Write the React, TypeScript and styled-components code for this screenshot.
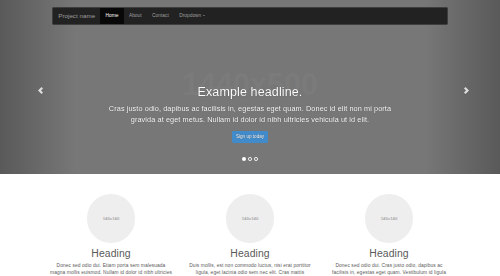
import React from "react";
import styled, { createGlobalStyle } from "styled-components";

const K = 500 / 1440;
const u = (n: number) => `${+(n * K).toFixed(3)}px`;

const Global = createGlobalStyle`
  html, body { margin: 0; padding: 0; overflow: hidden; background: #fff; }
  body {
    font-family: "Liberation Sans", Arial, Helvetica, sans-serif;
    color: #5a5a5a;
  }
  * { box-sizing: border-box; }
`;

const Carousel = styled.section`
  position: relative;
  height: ${u(500)};
  background: #777;
  overflow: hidden;
  display: flex;
  flex-direction: column;
  justify-content: flex-end;
  align-items: center;
`;

const PlaceholderArt = styled.div`
  position: absolute;
  inset: 0;
  display: flex;
  align-items: center;
  justify-content: center;
  padding-bottom: 4px;
  font: bold 30.5px Arial, "Liberation Sans", sans-serif;
  color: #7b7b7b;
`;

const Control = styled.div<{ $side: "left" | "right" }>`
  position: absolute;
  top: 0;
  bottom: 0;
  ${(p) => p.$side}: 0;
  width: 15%;
  background-image: linear-gradient(
    to ${(p) => (p.$side === "left" ? "right" : "left")},
    rgba(0, 0, 0, 0.25) 0,
    rgba(0, 0, 0, 0) 100%
  );
`;

const Chevron = styled.svg<{ $side: "left" | "right" }>`
  position: absolute;
  top: 86.8px;
  ${(p) => (p.$side === "left" ? "left: 38.3px;" : "right: 31.5px;")}
  width: 5px;
  height: 7px;
  fill: rgba(255, 255, 255, 0.78);
`;

const NavbarWrap = styled.header`
  position: absolute;
  top: ${u(20)};
  left: 0;
  right: 0;
  z-index: 20;
  display: flex;
  justify-content: center;
`;

const Navbar = styled.nav`
  width: ${u(1140)};
  height: 18px;
  background: #222;
  border: 1px solid #3e3e3e;
  border-radius: ${u(4)};
  display: flex;
  align-items: stretch;
`;

const Brand = styled.a`
  display: flex;
  align-items: center;
  padding: 0 ${u(15)};
  font-size: ${u(18)};
  color: #9d9d9d;
  text-decoration: none;
`;

const NavList = styled.ul`
  display: flex;
  margin: 0;
  padding: 0;
  list-style: none;
`;

const NavLink = styled.li<{ $active?: boolean }>`
  display: flex;
  align-items: center;
  padding: 0 ${u(15)};
  font-size: ${u(14)};
  color: ${(p) => (p.$active ? "#fff" : "#9d9d9d")};
  background: ${(p) => (p.$active ? "#080808" : "transparent")};
`;

const Caret = styled.span`
  display: inline-block;
  margin-left: 1.2px;
  border-top: 1.5px solid #9d9d9d;
  border-left: 1.5px solid transparent;
  border-right: 1.5px solid transparent;
`;

const Caption = styled.div`
  position: relative;
  z-index: 10;
  width: 60%;
  text-align: center;
  color: #fff;
  text-shadow: 0 ${u(1)} ${u(2)} rgba(0, 0, 0, 0.6);
  margin-bottom: 8px;
  will-change: transform;
`;

const Headline = styled.h1`
  margin: 0 0 4.7px;
  font-size: ${u(36)};
  line-height: 1.1;
  font-weight: 400;
  letter-spacing: 0.12px;
`;

const Lead = styled.p`
  margin: 0 0 5.7px;
  font-size: ${u(21)};
  line-height: 1.4;
  letter-spacing: 0.1px;
`;

const PrimaryButton = styled.a`
  display: inline-block;
  height: 12.3px;
  padding: 0 ${u(12)};
  font-size: 4.6px;
  line-height: 12.3px;
  color: #fff;
  background: #428bca;
  border-radius: ${u(4)};
  text-decoration: none;
  vertical-align: top;
`;

const Indicators = styled.ol`
  position: relative;
  z-index: 10;
  display: flex;
  align-items: center;
  margin: 0 0 12.6px;
  padding: 0;
  list-style: none;
`;

const Dot = styled.li<{ $active?: boolean }>`
  width: ${(p) => (p.$active ? "4.2px" : "3.6px")};
  height: ${(p) => (p.$active ? "4.2px" : "3.6px")};
  margin: ${(p) => (p.$active ? "0 0.9px" : "0 1.2px")};
  border-radius: 50%;
  border: ${(p) => (p.$active ? "none" : "0.8px solid #fff")};
  background: ${(p) => (p.$active ? "#fff" : "transparent")};
`;

const Marketing = styled.main`
  display: grid;
  grid-template-columns: repeat(3, 139px);
  justify-content: center;
  padding-top: 20.4px;
`;

const Column = styled.div`
  display: flex;
  flex-direction: column;
  align-items: center;
  text-align: center;
  padding: 0 ${u(15)};
`;

const Thumb = styled.div`
  width: ${u(140)};
  height: ${u(140)};
  border-radius: 50%;
  background: #eee;
  display: flex;
  align-items: center;
  justify-content: center;
  font: bold 4.3px Arial, "Liberation Sans", sans-serif;
  color: #aaa;
`;

const Heading = styled.h2`
  margin: 5.5px 0 3.5px;
  font-size: ${u(30)};
  line-height: 1.1;
  font-weight: 400;
  letter-spacing: 0.1px;
  color: #5a5a5a;
`;

const Blurb = styled.p`
  margin: 0 3px;
  font-size: ${u(14)};
  line-height: ${u(20)};
  letter-spacing: 0.09px;
  color: #5a5a5a;
`;

const chevronLeft = "M7 0 L10 3 L6 7 L10 11 L7 14 L0 7 Z";
const chevronRight = "M3 0 L0 3 L4 7 L0 11 L3 14 L10 7 Z";

const columns = [
  "Donec sed odio dui. Etiam porta sem malesuada magna mollis euismod. Nullam id dolor id nibh ultricies vehicula ut id elit. Morbi leo risus, porta ac consectetur ac, vestibulum at eros. Praesent commodo cursus magna.",
  "Duis mollis, est non commodo luctus, nisi erat porttitor ligula, eget lacinia odio sem nec elit. Cras mattis consectetur purus sit amet fermentum. Fusce dapibus, tellus ac cursus commodo, tortor mauris condimentum nibh, ut fermentum massa justo sit amet risus.",
  "Donec sed odio dui. Cras justo odio, dapibus ac facilisis in, egestas eget quam. Vestibulum id ligula porta felis euismod semper. Fusce dapibus, tellus ac cursus commodo, tortor mauris condimentum nibh, ut fermentum massa justo sit amet risus.",
];

export default function App() {
  return (
    <>
      <Global />
      <Carousel>
        <PlaceholderArt>1440x500</PlaceholderArt>
        <Control $side="left">
          <Chevron $side="left" viewBox="0 0 10 14">
            <path d={chevronLeft} />
          </Chevron>
        </Control>
        <Control $side="right">
          <Chevron $side="right" viewBox="0 0 10 14">
            <path d={chevronRight} />
          </Chevron>
        </Control>
        <NavbarWrap>
          <Navbar>
            <Brand>Project name</Brand>
            <NavList>
              <NavLink $active>Home</NavLink>
              <NavLink>About</NavLink>
              <NavLink>Contact</NavLink>
              <NavLink>
                Dropdown <Caret />
              </NavLink>
            </NavList>
          </Navbar>
        </NavbarWrap>
        <Caption>
          <Headline>Example headline.</Headline>
          <Lead>
            Cras justo odio, dapibus ac facilisis in, egestas eget quam. Donec id elit non mi porta
            gravida at eget metus. Nullam id dolor id nibh ultricies vehicula ut id elit.
          </Lead>
          <PrimaryButton>Sign up today</PrimaryButton>
        </Caption>
        <Indicators>
          <Dot $active />
          <Dot />
          <Dot />
        </Indicators>
      </Carousel>
      <Marketing>
        {columns.map((text, i) => (
          <Column key={i}>
            <Thumb>140x140</Thumb>
            <Heading>Heading</Heading>
            <Blurb>{text}</Blurb>
          </Column>
        ))}
      </Marketing>
    </>
  );
}
